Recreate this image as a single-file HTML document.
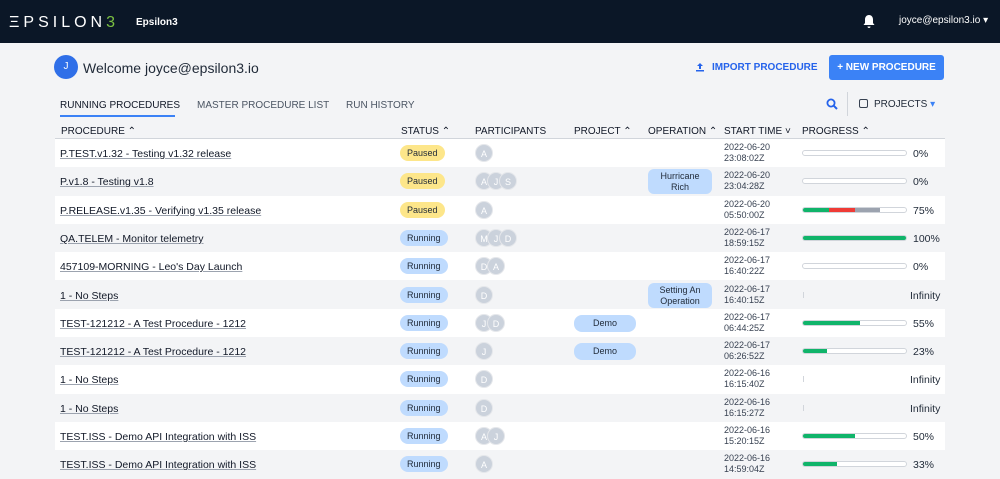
<!DOCTYPE html>
<html><head><style>
*{box-sizing:border-box;margin:0;padding:0}
body{width:1000px;height:473px;overflow:hidden;background:#f3f4f6;font-family:"Liberation Sans",sans-serif;color:#1f2937;position:relative}
.top{position:absolute;left:0;top:0;width:1000px;height:43px;background:#0b1727}
.abs{position:absolute}
.row{position:absolute;left:55px;width:890px;height:28.3px;font-size:10px}
.row.w{background:#fff}
.row>*{position:absolute}
.name{left:5px;top:9px;text-decoration:underline;text-decoration-color:#9ca3af;font-size:10.5px;color:#111827}
.st{left:345px;top:6px;height:16px;border-radius:8px;padding:0 7px;line-height:16px;font-size:9px}
.p{background:#fde68a}.r{background:#bfdbfe}
.av{top:5px;width:18px;height:18px;border-radius:50%;background:#cbd2dc;color:#fff;font-size:9px;text-align:center;line-height:18px;border:1px solid #e5e7eb}
.proj{left:519px;top:6px;width:62px;height:17px;border-radius:8px;background:#bfdbfe;text-align:center;line-height:17px;font-size:9px}
.op{left:593px;top:2px;width:64px;height:25px;border-radius:6px;background:#bfdbfe;text-align:center;font-size:9px;line-height:11px;padding-top:2px}
.t{left:669px;top:3px;font-size:9px;line-height:11px;color:#374151}
.bar{left:747px;top:11px;width:105px;height:6px;border:1px solid #d1d5db;border-radius:3px;background:#fff;overflow:hidden;display:flex}
.bar i{display:block;height:100%}
.pc{left:858px;top:9px;font-size:10.5px}
.hd{position:absolute;top:126px;font-size:10px;color:#111827}
</style></head><body>
<div class="top">
<div class="abs" style="left:9px;top:14px;color:#fff;font-size:16px;letter-spacing:4px">ΞPSILON<span style="color:#7bc142">3</span></div>
<div class="abs" style="left:136px;top:17px;color:#fff;font-size:10px;font-weight:bold">Epsilon3</div>
<svg class="abs" style="left:862px;top:14px" width="14" height="15" viewBox="0 0 14 15"><path d="M7 1C4.5 1 3 3 3 5.5V9L1.5 11H12.5L11 9V5.5C11 3 9.5 1 7 1Z M5.5 12.5A1.5 1.5 0 0 0 8.5 12.5Z" fill="#fff"/></svg>
<div class="abs" style="left:899px;top:15px;color:#fff;font-size:10px">joyce@epsilon3.io ▾</div>
</div>
<div class="abs" style="left:54px;top:55px;width:24px;height:24px;border-radius:50%;background:#2f6fe8;color:#fff;font-size:10px;text-align:center;line-height:24px">J</div>
<div class="abs" style="left:83px;top:60px;font-size:14px">Welcome joyce@epsilon3.io</div>
<svg class="abs" style="left:695px;top:62px" width="10" height="10" viewBox="0 0 10 10"><path d="M5 1L2 4H4V7H6V4H8Z M1 8H9V9.5H1Z" fill="#2563eb"/></svg>
<div class="abs" style="left:712px;top:62px;font-size:10px;font-weight:bold;color:#2563eb">IMPORT PROCEDURE</div>
<div class="abs" style="left:829px;top:55px;width:115px;height:25px;background:#3b82f6;border-radius:3px;color:#fff;font-size:10px;font-weight:bold;line-height:25px;text-align:center">+ NEW PROCEDURE</div>
<div class="abs" style="left:60px;top:100px;font-size:10px;color:#111827">RUNNING PROCEDURES</div>
<div class="abs" style="left:60px;top:115px;width:115px;height:2px;background:#3b82f6"></div>
<div class="abs" style="left:197px;top:100px;font-size:10px;color:#4b5563">MASTER PROCEDURE LIST</div>
<div class="abs" style="left:346px;top:100px;font-size:10px;color:#4b5563">RUN HISTORY</div>
<svg class="abs" style="left:826px;top:98px" width="12" height="12" viewBox="0 0 12 12"><circle cx="5" cy="5" r="3.6" stroke="#2563eb" stroke-width="1.8" fill="none"/><path d="M7.6 7.6L11 11" stroke="#2563eb" stroke-width="2"/></svg>
<div class="abs" style="left:847px;top:92px;width:1px;height:24px;background:#d1d5db"></div>
<div class="abs" style="left:859px;top:99px;width:9px;height:9px;border:1px solid #374151;border-radius:2px"></div>
<div class="abs" style="left:874px;top:99px;font-size:10px">PROJECTS <span style="color:#3b82f6">▾</span></div>
<div class="hd" style="left:61px">PROCEDURE ⌃</div>
<div class="hd" style="left:401px">STATUS ⌃</div>
<div class="hd" style="left:475px">PARTICIPANTS</div>
<div class="hd" style="left:574px">PROJECT ⌃</div>
<div class="hd" style="left:648px">OPERATION ⌃</div>
<div class="hd" style="left:724px">START TIME ˅</div>
<div class="hd" style="left:802px">PROGRESS ⌃</div>
<div class="abs" style="left:55px;top:138px;width:890px;height:1px;background:#d1d5db"></div>

<div class="row w" style="top:139px"><span class="name">P.TEST.v1.32 - Testing v1.32 release</span><span class="st p">Paused</span><span class="av" style="left:420px">A</span><span class="t">2022-06-20<br>23:08:02Z</span><span class="bar"></span><span class="pc">0%</span></div>
<div class="row" style="top:167.3px"><span class="name">P.v1.8 - Testing v1.8</span><span class="st p">Paused</span><span class="av" style="left:420px">A</span><span class="av" style="left:432px">J</span><span class="av" style="left:444px">S</span><span class="op">Hurricane<br>Rich</span><span class="t">2022-06-20<br>23:04:28Z</span><span class="bar"></span><span class="pc">0%</span></div>
<div class="row w" style="top:195.6px"><span class="name">P.RELEASE.v1.35 - Verifying v1.35 release</span><span class="st p">Paused</span><span class="av" style="left:420px">A</span><span class="t">2022-06-20<br>05:50:00Z</span><span class="bar"><i style="width:25%;background:#10b46a"></i><i style="width:25%;background:#ef3b36"></i><i style="width:25%;background:#9ca3af"></i></span><span class="pc">75%</span></div>
<div class="row" style="top:223.9px"><span class="name">QA.TELEM - Monitor telemetry</span><span class="st r">Running</span><span class="av" style="left:420px">M</span><span class="av" style="left:432px">J</span><span class="av" style="left:444px">D</span><span class="t">2022-06-17<br>18:59:15Z</span><span class="bar"><i style="width:100%;background:#10b46a"></i></span><span class="pc">100%</span></div>
<div class="row w" style="top:252.2px"><span class="name">457109-MORNING - Leo's Day Launch</span><span class="st r">Running</span><span class="av" style="left:420px">D</span><span class="av" style="left:432px">A</span><span class="t">2022-06-17<br>16:40:22Z</span><span class="bar"></span><span class="pc">0%</span></div>
<div class="row" style="top:280.5px"><span class="name">1 - No Steps</span><span class="st r">Running</span><span class="av" style="left:420px">D</span><span class="op">Setting An<br>Operation</span><span class="t">2022-06-17<br>16:40:15Z</span><span style="left:748px;top:11px;width:1px;height:6px;background:#d1d5db"></span><span class="pc" style="left:855px">Infinity</span></div>
<div class="row w" style="top:308.8px"><span class="name">TEST-121212 - A Test Procedure - 1212</span><span class="st r">Running</span><span class="av" style="left:420px">J</span><span class="av" style="left:432px">D</span><span class="proj">Demo</span><span class="t">2022-06-17<br>06:44:25Z</span><span class="bar"><i style="width:55%;background:#10b46a"></i></span><span class="pc">55%</span></div>
<div class="row" style="top:337.1px"><span class="name">TEST-121212 - A Test Procedure - 1212</span><span class="st r">Running</span><span class="av" style="left:420px">J</span><span class="proj">Demo</span><span class="t">2022-06-17<br>06:26:52Z</span><span class="bar"><i style="width:23%;background:#10b46a"></i></span><span class="pc">23%</span></div>
<div class="row w" style="top:365.4px"><span class="name">1 - No Steps</span><span class="st r">Running</span><span class="av" style="left:420px">D</span><span class="t">2022-06-16<br>16:15:40Z</span><span style="left:748px;top:11px;width:1px;height:6px;background:#d1d5db"></span><span class="pc" style="left:855px">Infinity</span></div>
<div class="row" style="top:393.7px"><span class="name">1 - No Steps</span><span class="st r">Running</span><span class="av" style="left:420px">D</span><span class="t">2022-06-16<br>16:15:27Z</span><span style="left:748px;top:11px;width:1px;height:6px;background:#d1d5db"></span><span class="pc" style="left:855px">Infinity</span></div>
<div class="row w" style="top:422px"><span class="name">TEST.ISS - Demo API Integration with ISS</span><span class="st r">Running</span><span class="av" style="left:420px">A</span><span class="av" style="left:432px">J</span><span class="t">2022-06-16<br>15:20:15Z</span><span class="bar"><i style="width:50%;background:#10b46a"></i></span><span class="pc">50%</span></div>
<div class="row" style="top:450.3px"><span class="name">TEST.ISS - Demo API Integration with ISS</span><span class="st r">Running</span><span class="av" style="left:420px">A</span><span class="t">2022-06-16<br>14:59:04Z</span><span class="bar"><i style="width:33%;background:#10b46a"></i></span><span class="pc">33%</span></div>
</body></html>
